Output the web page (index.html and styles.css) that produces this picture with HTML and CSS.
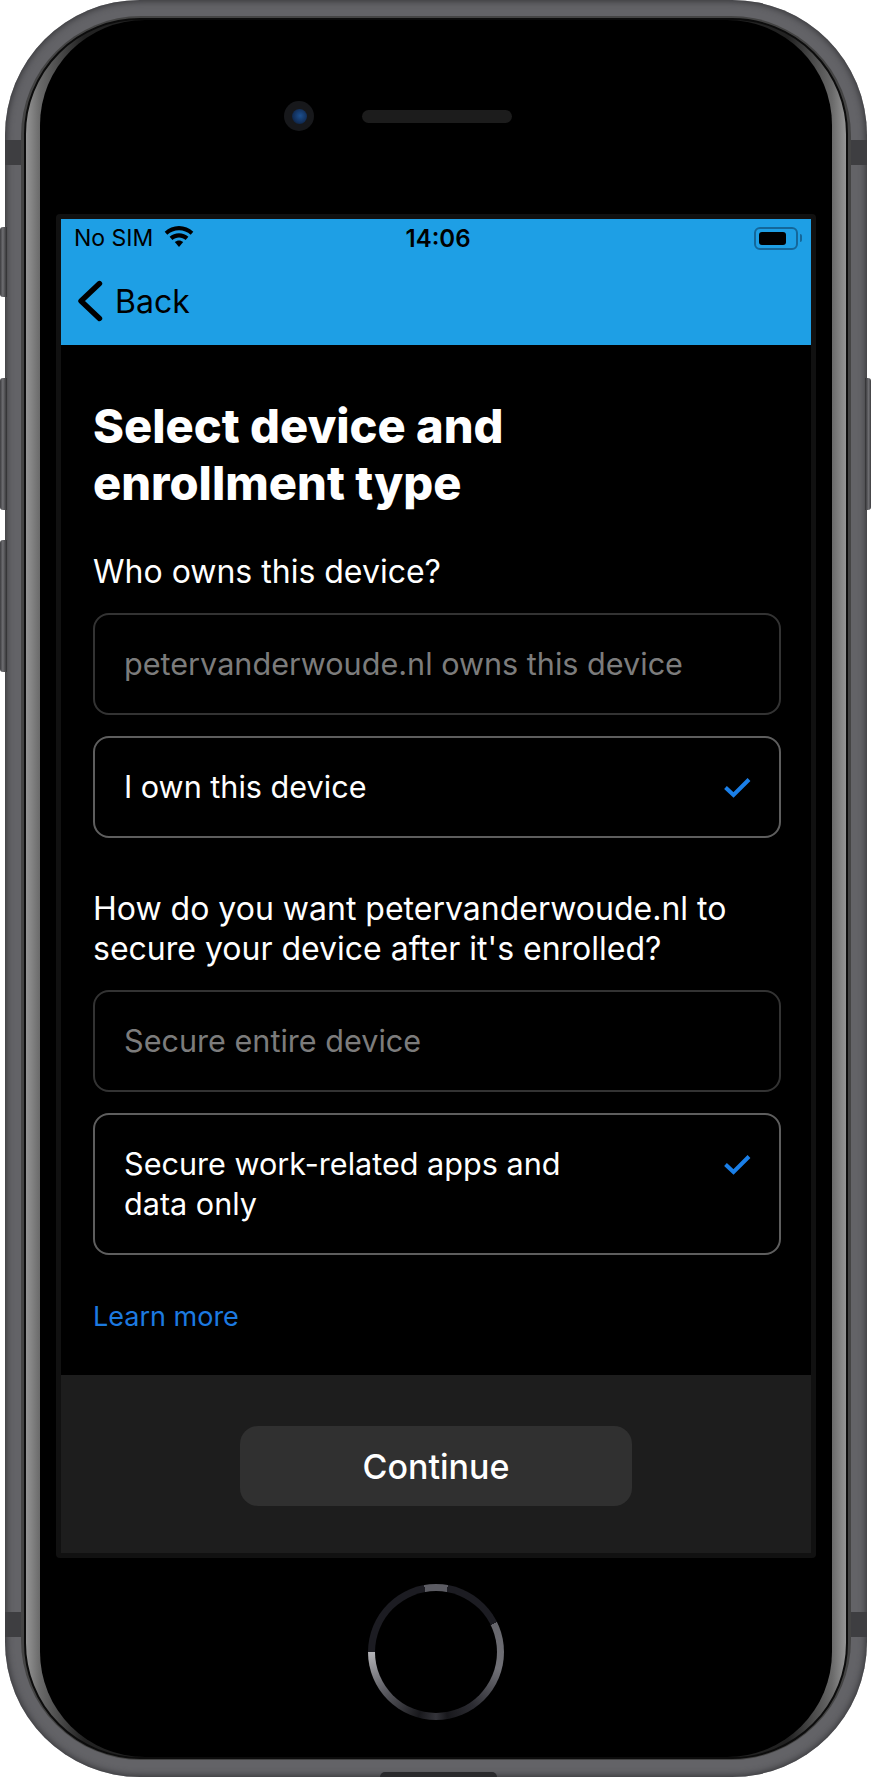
FILE: index.html
```html
<!DOCTYPE html>
<html>
<head>
<meta name="viewport" content="width=device-width, initial-scale=1">
<title>Select device and enrollment type</title>
<link rel="stylesheet" href="styles.css">
</head>
<body>

<div class="phone">
  <span class="side-btn mute"></span>
  <span class="side-btn vol-up"></span>
  <span class="side-btn vol-down"></span>
  <span class="side-btn power"></span>
  <span class="band band-tl"></span>
  <span class="band band-tr"></span>
  <span class="band band-bl"></span>
  <span class="band band-br"></span>
  <span class="bottom-notch"></span>

  <div class="edge">
    <div class="silver">
      <div class="front">

        <div class="top-bezel">
          <div class="camera"><span class="lens"></span></div>
          <div class="speaker"></div>
        </div>

        <div class="bezel">
          <div class="screen">
            <div class="topbar">
              <div class="status">
                <div class="status-left">
                  <span>No SIM</span>
                  <svg class="wifi" width="30" height="21" viewBox="0 0 30 21">
                    <path d="M15 0C9.500 0 4.700 2.200 .7 5.800L3.300 8.800C6.500 6 10.500 4.300 15 4.300C19.500 4.300 23.500 6 26.700 8.800L29.300 5.800C25.300 2.200 20.500 0 15 0Z"/>
                    <path d="M15 7.200C11.400 7.200 8.200 8.500 5.600 10.800L8.400 13.900C10.200 12.400 12.500 11.500 15 11.500C17.500 11.500 19.800 12.400 21.600 13.900L24.400 10.800C21.800 8.500 18.600 7.200 15 7.200Z"/>
                    <path d="M15 14.500C13.500 14.500 12 15.100 10.800 16.100L15 21L19.200 16.100C18 15.100 16.500 14.500 15 14.500Z"/>
                  </svg>
                </div>
                <span class="time">14:06</span>
                <div class="status-right">
                  <div class="battery"><span class="battery-fill"></span></div>
                  <span class="battery-nub"></span>
                </div>
              </div>
              <div class="nav">
                <svg width="26" height="42" viewBox="0 0 26 42">
                  <path d="M22.500 3.500L4 21l18.500 17.500" fill="none" stroke="#000" stroke-width="5.400" stroke-linecap="round" stroke-linejoin="round"/>
                </svg>
                <span>Back</span>
              </div>
            </div>

            <div class="main">
              <h1>Select device and<br>enrollment type</h1>

              <p class="label">Who owns this device?</p>
              <div class="options">
                <div class="option disabled"><span>petervanderwoude.nl owns this device</span></div>
                <div class="option selected">
                  <span>I own this device</span>
                  <div class="tick">
                    <svg width="28" height="22" viewBox="0 0 28 22"><path d="M2.500 11.500l8 7.500L26 3.500" fill="none" stroke="#1a7fe8" stroke-width="4"/></svg>
                  </div>
                </div>
              </div>

              <p class="label second">How do you want petervanderwoude.nl to<br>secure your device after it's enrolled?</p>
              <div class="options">
                <div class="option disabled"><span>Secure entire device</span></div>
                <div class="option selected">
                  <span>Secure work-related apps and<br>data only</span>
                  <div class="tick">
                    <svg width="28" height="22" viewBox="0 0 28 22"><path d="M2.500 11.500l8 7.500L26 3.500" fill="none" stroke="#1a7fe8" stroke-width="4"/></svg>
                  </div>
                </div>
              </div>

              <a class="learn">Learn more</a>
            </div>

            <div class="footer">
              <div class="continue">Continue</div>
            </div>
          </div>
        </div>

        <div class="home"></div>
      </div>
    </div>
  </div>
</div>

</body>
</html>
```

FILE: styles.css
```css
* {
  box-sizing: border-box;
}

body {
  margin: 0;
  background: #fff;
  font-family: Inter, "Liberation Sans", sans-serif;
  color: #fff;
}

/* the metal frame */
.phone {
  position: relative;
  width: 862px;
  height: 1777px;
  margin-left: 5px;
  padding: 16px 16px 17px;
  border-radius: 135px;
  background: #636367;
  box-shadow: inset 0 0 7px 1px #323235;
}

.edge {
  height: 100%;
  padding: 2px 3px 1px;
  border-radius: 120px;
  background: #444;
}

.silver {
  height: 100%;
  padding: 0 14px;
  border: 2px solid #0c0c0c;
  border-radius: 116px;
  background: linear-gradient(90deg, #959595 0, #6a6a6a 14px, #222 58px, #222 calc(100% - 58px), #6a6a6a calc(100% - 14px), #959595 100%);
}

.front {
  height: 100%;
  border-radius: 105px;
  background: #000;
  display: flex;
  flex-direction: column;
  align-items: center;
}

/* camera and speaker */
.top-bezel {
  width: 100%;
  height: 194px;
  padding: 81px 0 0 244px;
  display: flex;
  gap: 48px;
}

.camera {
  width: 30px;
  height: 30px;
  border-radius: 50%;
  background: #17181b;
  display: flex;
  align-items: center;
  justify-content: center;
}

.lens {
  width: 15px;
  height: 15px;
  border-radius: 50%;
  background: radial-gradient(circle at 55% 45%, #1c4f8e 0, #12305c 55%, #0a1526 100%);
}

.speaker {
  width: 150px;
  height: 13px;
  margin-top: 9px;
  border-radius: 7px;
  background: #1c1c1c;
}

/* screen */
.bezel {
  width: 760px;
  padding: 5px;
  border-radius: 4px;
  background: #111;
}

.screen {
  height: 1334px;
  background: #000;
  display: flex;
  flex-direction: column;
}

.topbar {
  height: 126px;
  background: #1e9fe5;
  color: #000;
}

.status {
  height: 38px;
  padding: 0 9px 0 13px;
  display: flex;
  align-items: center;
  justify-content: space-between;
  font-size: 23px;
}

.status-left {
  width: 200px;
  display: flex;
  align-items: center;
  gap: 11px;
}

.wifi {
  margin-top: -4px;
}

.time {
  font-size: 24px;
  font-weight: 600;
}

.status-right {
  width: 200px;
  display: flex;
  align-items: center;
  justify-content: flex-end;
  gap: 2px;
}

.battery {
  width: 44px;
  height: 23px;
  padding: 3px;
  border: 2px solid #14679a;
  border-radius: 6px;
}

.battery-fill {
  display: block;
  width: 27px;
  height: 100%;
  border-radius: 3px;
  background: #000;
}

.battery-nub {
  width: 2px;
  height: 8px;
  border-radius: 0 2px 2px 0;
  background: #14679a;
}

.nav {
  height: 88px;
  padding-left: 16px;
  display: flex;
  align-items: center;
  gap: 12px;
  font-size: 32px;
}

.main {
  flex: 1;
  padding: 52px 30px 0 32px;
}

h1 {
  margin: 0;
  font-size: 47px;
  line-height: 57px;
  font-weight: 800;
}

.label {
  margin: 41px 0 21px;
  font-size: 32px;
  line-height: 40px;
}

.label.second {
  margin-top: 51px;
}

.options {
  display: flex;
  flex-direction: column;
  gap: 21px;
}

.option {
  padding: 29px 29px;
  border: 2px solid #5e5e5e;
  border-radius: 16px;
  display: flex;
  justify-content: space-between;
  font-size: 30.600px;
  line-height: 40px;
}

.option.disabled {
  border-color: #333;
  color: #7c7c7c;
}

.tick {
  height: 40px;
  display: flex;
  align-items: center;
  margin-right: -1px;
}

.learn {
  display: block;
  margin-top: 42px;
  font-size: 27px;
  line-height: 40px;
  color: #1c7ae0;
}

.footer {
  height: 178px;
  padding-top: 51px;
  background: #1d1d1d;
  display: flex;
  justify-content: center;
}

.continue {
  width: 392px;
  height: 80px;
  border-radius: 18px;
  background: #303030;
  display: flex;
  align-items: center;
  justify-content: center;
  font-size: 34px;
  font-weight: 500;
}

/* home button */
.home {
  width: 136px;
  height: 136px;
  margin-top: 26px;
  border-radius: 50%;
  border: 7px solid transparent;
  background: linear-gradient(#000, #000) padding-box, conic-gradient(#5c5c63 0 10deg, #1c1c22 10deg 64deg, #66666c 64deg, #707076 105deg, #2c2c32 145deg, #18181c 170deg, #34343a 180deg, #18181c 195deg, #606066 235deg, #b4b4b8 270deg, #1c1c22 270deg 350deg, #5c5c63 350deg) border-box;
}

/* things that sit over the frame */
.side-btn {
  position: absolute;
  left: -5px;
  width: 7px;
  border-radius: 3px 0 0 3px;
  background: linear-gradient(90deg, #3c3c3f, #6e6e72 40%, #2e2e30);
}

.mute {
  top: 227px;
  height: 70px;
}

.vol-up {
  top: 378px;
  height: 132px;
}

.vol-down {
  top: 540px;
  height: 132px;
}

.side-btn.power {
  left: auto;
  right: -4px;
  top: 378px;
  height: 132px;
  width: 6px;
  border-radius: 0 3px 3px 0;
  background: linear-gradient(90deg, #2e2e30, #6e6e72 60%, #3c3c3f);
}

.band {
  position: absolute;
  width: 16px;
  height: 25px;
  background: #3e3e41;
}

.band-tl {
  left: 0;
  top: 140px;
}

.band-tr {
  right: 0;
  top: 140px;
}

.band-bl {
  left: 0;
  top: 1612px;
}

.band-br {
  right: 0;
  top: 1612px;
}

.bottom-notch {
  position: absolute;
  left: 375px;
  bottom: 0;
  width: 117px;
  height: 5px;
  border-radius: 5px 5px 0 0;
  background: #2a2a2c;
}
```
